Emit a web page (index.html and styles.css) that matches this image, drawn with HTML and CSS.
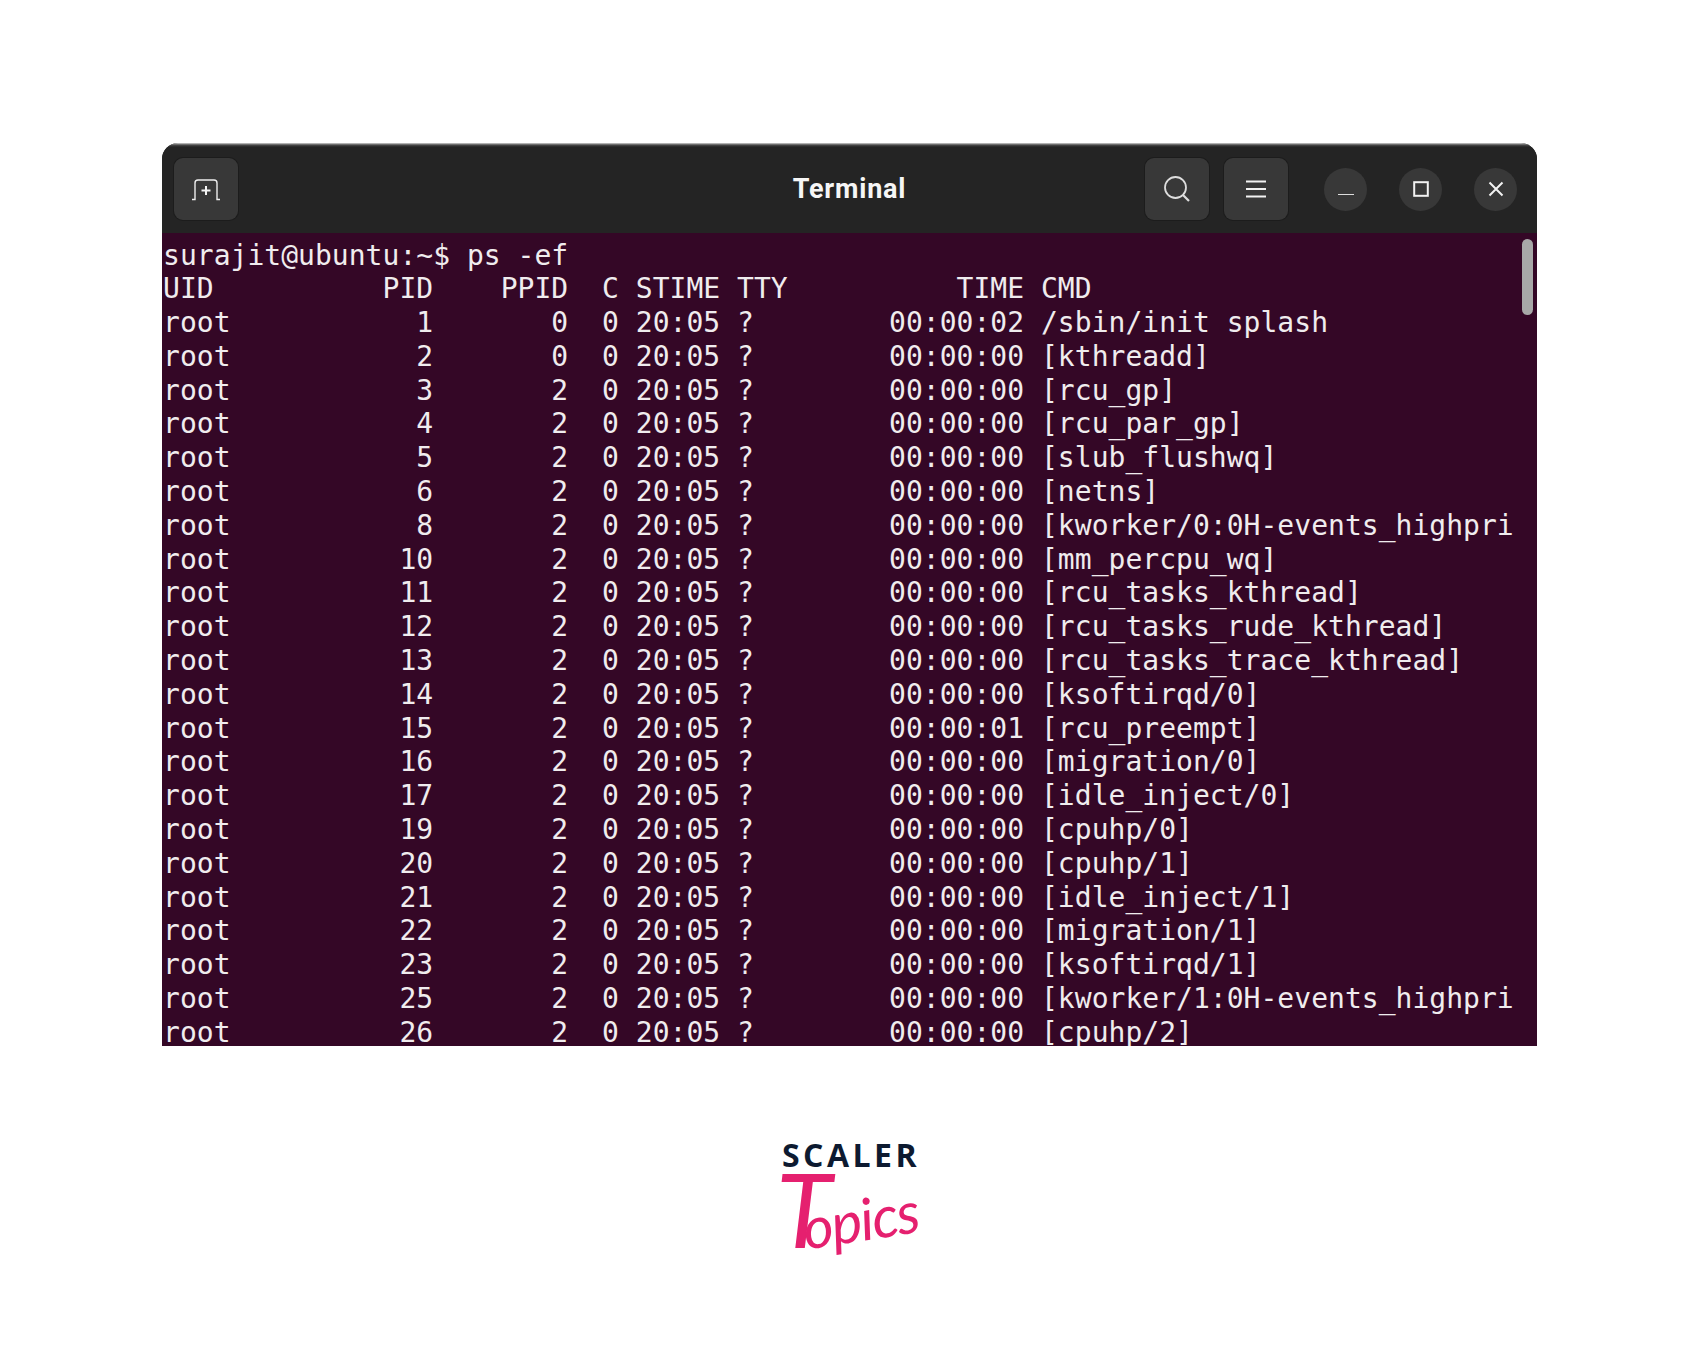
FILE: index.html
```html
<!DOCTYPE html>
<html lang="en">
<head>
<meta charset="utf-8">
<title>Terminal</title>
<link rel="stylesheet" href="styles.css">
</head>
<body>
<main class="page">
  <section class="window">
    <header class="titlebar">
      <button class="tool-btn" aria-label="New tab">
        <svg class="icon icon-tab" viewBox="0 0 28 24" width="28" height="24"><path d="M0 22.500h3V6a3 3 0 0 1 3-3h16a3 3 0 0 1 3 3v16.500h3" fill="none" stroke="#eee" stroke-width="1.400"/><path d="M14 9v9M9.500 13.500h9" fill="none" stroke="#f4f4f4" stroke-width="2"/></svg>
      </button>
      <h1 class="title">Terminal</h1>
      <div class="actions">
        <button class="tool-btn" aria-label="Search">
          <svg class="icon" viewBox="0 0 28 28" width="28" height="28"><circle cx="12.500" cy="12.500" r="10.500" fill="none" stroke="#ddd" stroke-width="1.800"/><path d="M20 20l6 6" stroke="#ddd" stroke-width="2.200"/></svg>
        </button>
        <button class="tool-btn" aria-label="Menu">
          <svg class="icon" viewBox="0 0 20 18" width="20" height="18"><path d="M0 1.500h20M0 9h20M0 16.500h20" stroke="#f2f2f2" stroke-width="1.800"/></svg>
        </button>
        <div class="win-controls">
          <button class="circle-btn" aria-label="Minimize"><svg viewBox="0 0 16 16" width="16" height="16"><path d="M0 13.500h16" stroke="#ddd" stroke-width="1.200"/></svg></button>
          <button class="circle-btn" aria-label="Maximize"><svg viewBox="0 0 16 16" width="16" height="16"><rect x="1.200" y="1.200" width="13.600" height="13.600" fill="none" stroke="#f2f2f2" stroke-width="2"/></svg></button>
          <button class="circle-btn" aria-label="Close"><svg viewBox="0 0 16 16" width="16" height="16"><path d="M1.500 1.500l13 13M14.500 1.500l-13 13" stroke="#f2f2f2" stroke-width="2"/></svg></button>
        </div>
      </div>
    </header>
    <div class="terminal">
<pre class="output">surajit@ubuntu:~$ ps -ef
UID          PID    PPID  C STIME TTY          TIME CMD
root           1       0  0 20:05 ?        00:00:02 /sbin/init splash
root           2       0  0 20:05 ?        00:00:00 [kthreadd]
root           3       2  0 20:05 ?        00:00:00 [rcu_gp]
root           4       2  0 20:05 ?        00:00:00 [rcu_par_gp]
root           5       2  0 20:05 ?        00:00:00 [slub_flushwq]
root           6       2  0 20:05 ?        00:00:00 [netns]
root           8       2  0 20:05 ?        00:00:00 [kworker/0:0H-events_highpri
root          10       2  0 20:05 ?        00:00:00 [mm_percpu_wq]
root          11       2  0 20:05 ?        00:00:00 [rcu_tasks_kthread]
root          12       2  0 20:05 ?        00:00:00 [rcu_tasks_rude_kthread]
root          13       2  0 20:05 ?        00:00:00 [rcu_tasks_trace_kthread]
root          14       2  0 20:05 ?        00:00:00 [ksoftirqd/0]
root          15       2  0 20:05 ?        00:00:01 [rcu_preempt]
root          16       2  0 20:05 ?        00:00:00 [migration/0]
root          17       2  0 20:05 ?        00:00:00 [idle_inject/0]
root          19       2  0 20:05 ?        00:00:00 [cpuhp/0]
root          20       2  0 20:05 ?        00:00:00 [cpuhp/1]
root          21       2  0 20:05 ?        00:00:00 [idle_inject/1]
root          22       2  0 20:05 ?        00:00:00 [migration/1]
root          23       2  0 20:05 ?        00:00:00 [ksoftirqd/1]
root          25       2  0 20:05 ?        00:00:00 [kworker/1:0H-events_highpri
root          26       2  0 20:05 ?        00:00:00 [cpuhp/2]</pre>
      <div class="scrollbar"></div>
    </div>
  </section>
  <footer class="logo">
    <div class="logo-scaler">SCALER</div>
    <div class="logo-topics"><span class="logo-t">T</span><span class="logo-rest">opics</span></div>
  </footer>
</main>
</body>
</html>
```
FILE: styles.css
```css
* { box-sizing: border-box; }
html, body { margin: 0; background: #fff; }
.page {
  width: 1700px;
  height: 1361px;
  padding-top: 143px;
  display: flex;
  flex-direction: column;
  align-items: center;
  overflow: hidden;
}
.window {
  width: 1375px;
  height: 903px;
  margin-left: -1px;
  display: flex;
  flex-direction: column;
  border-radius: 16px 16px 0 0;
  overflow: hidden;
  background: #242424;
}
.titlebar {
  flex: 0 0 90px;
  position: relative;
  display: flex;
  align-items: center;
  justify-content: space-between;
  padding: 2px 20px 0 12px;
  background: linear-gradient(#d4d4d4 0, #4a4a4a 2px, #242424 4px);
}
.title {
  position: absolute;
  left: 0;
  right: 0;
  margin: 0;
  text-align: center;
  font: 700 27px/1 Roboto, sans-serif;
  letter-spacing: 0.8px;
  color: #f6f6f6;
  pointer-events: none;
}
.actions { display: flex; align-items: center; gap: 15px; }
.tool-btn {
  width: 64px;
  height: 62px;
  padding: 0;
  border: 0;
  border-radius: 9px;
  background: #383838;
  box-shadow: 0 0 0 1px #1c1c1c;
  display: flex;
  align-items: center;
  justify-content: center;
}
.win-controls { display: flex; gap: 32px; margin-left: 21px; }
.circle-btn {
  width: 43px;
  height: 43px;
  padding: 0;
  border: 0;
  border-radius: 50%;
  background: #383838;
  display: flex;
  align-items: center;
  justify-content: center;
}
.terminal {
  flex: 1;
  position: relative;
  overflow: hidden;
  background: #340726;
}
.output {
  margin: 0;
  padding: 5.5px 0 0 1px;
  font-family: "DejaVu Sans Mono", monospace;
  font-size: 28px;
  line-height: 33.8px;
  letter-spacing: 0.027px;
  color: #f0ecee;
  white-space: pre;
}
.scrollbar {
  position: absolute;
  top: 6px;
  right: 4px;
  width: 11px;
  height: 76px;
  border-radius: 6px;
  background: #a8a8a8;
}
.logo {
  margin-top: 93px;
  margin-left: 2px;
  display: flex;
  flex-direction: column;
  align-items: center;
}
.logo-scaler {
  font: 700 32px/1 "Open Sans", sans-serif;
  letter-spacing: 3.5px;
  color: #0d1a30;
}
.logo-topics {
  height: 80px;
  display: flex;
  align-items: flex-end;
  color: #e5206f;
}
.logo-t {
  font: italic 400 102px/84px Lato, sans-serif;
  margin-right: -30px;
  margin-left: -8px;
}
.logo-rest {
  font: italic 400 58px/64px Lato, sans-serif;
  letter-spacing: -1.500px;
  transform: rotate(-9deg);
  padding-bottom: 0;
}
```
